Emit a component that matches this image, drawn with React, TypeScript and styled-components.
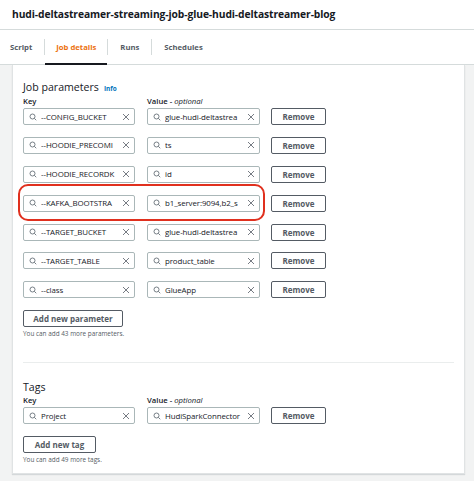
import React from 'react';
import styled, {createGlobalStyle} from 'styled-components';

const GlobalStyle = createGlobalStyle`
	html, body {
		margin: 0;
		padding: 0;
		background: #ffffff;
	}
	body {
		font-family: "Open Sans", "Noto Sans", Arial, sans-serif;
		color: #16191f;
	}
`;

const Page = styled.div`
	width: 474px;
	height: 481px;
	display: flex;
	flex-direction: column;
	overflow: hidden;
	background: #ffffff;
`;

const Header = styled.div`
	height: 30px;
	box-sizing: border-box;
	padding: 0 12px 2px 12px;
	display: flex;
	align-items: center;
	border-bottom: 1px solid #d5dbdb;
	font-weight: 700;
	font-size: 10.3px;
	letter-spacing: -0.1px;
	white-space: nowrap;
`;

const Tabs = styled.div`
	height: 35px;
	box-sizing: border-box;
	display: flex;
	align-items: stretch;
	border-bottom: 1px solid #d5dbdb;
`;

const Tab = styled.div<{$active?: boolean}>`
	display: flex;
	align-items: center;
	padding: 0 ${p => p.$active ? '11px' : '12px'};
	font-size: 7.7px;
	font-weight: 700;
	color: ${p => p.$active ? '#ec7211' : '#545b64'};
	border-bottom: 2px solid ${p => p.$active ? '#16191f' : 'transparent'};
	margin-bottom: -1px;
	&:first-child {
		padding-left: 10px;
	}
`;

const TabSep = styled.div`
	width: 1px;
	height: 16px;
	align-self: center;
	background: #d5dbdb;
`;

const Body = styled.div`
	flex: 1;
	background: #f2f3f3;
	padding: 0 10px 7px 12px;
	display: flex;
`;

const Panel = styled.div`
	flex: 1;
	background: #ffffff;
	border: 1px solid #e0e3e4;
	border-top: none;
	box-shadow: 0 1px 1px rgba(0, 27, 43, 0.12);
	padding: 15px 10px 0 10px;
	display: flex;
	flex-direction: column;
`;

const Section = styled.div`
	display: flex;
	flex-direction: column;
`;

const Heading = styled.div`
	display: flex;
	align-items: baseline;
	gap: 5px;
	font-size: 10.6px;
	line-height: 15px;
	color: #16191f;
`;

const InfoLink = styled.span`
	font-size: 6.4px;
	font-weight: 700;
	color: #0073bb;
`;

const Labels = styled.div`
	display: grid;
	grid-template-columns: 112px 113px;
	column-gap: 12px;
	font-size: 7.7px;
	font-weight: 600;
	line-height: 10px;
	margin-bottom: 2px;
	color: #16191f;
	i {
		font-weight: 400;
	}
`;

const Rows = styled.div`
	display: flex;
	flex-direction: column;
	gap: 11.9px;
`;

const Row = styled.div`
	position: relative;
	display: grid;
	grid-template-columns: 112px 113px 54px;
	column-gap: 12px;
	height: 17px;
	& > :nth-child(3) {
		margin-left: -1px;
	}
`;

const Input = styled.div`
	box-sizing: border-box;
	height: 17px;
	border: 1px solid #aab7b8;
	border-radius: 2px;
	display: flex;
	align-items: center;
	padding: 0 4px 0 5px;
	gap: 4px;
	font-size: 7.9px;
	color: #16191f;
	overflow: hidden;
`;

const InputText = styled.span`
	flex: 1;
	white-space: nowrap;
	overflow: hidden;
	letter-spacing: -0.1px;
`;

const Button = styled.div<{$width?: number}>`
	box-sizing: border-box;
	height: 17px;
	width: ${p => p.$width ? `${p.$width}px` : 'auto'};
	border: 1px solid #545b64;
	border-radius: 2px;
	display: flex;
	align-items: center;
	justify-content: center;
	font-size: 8px;
	font-weight: 700;
	color: #545b64;
	white-space: nowrap;
`;

const AddArea = styled.div<{$top: number}>`
	margin-top: ${p => p.$top}px;
	display: flex;
	flex-direction: column;
	align-items: flex-start;
	gap: 2px;
`;

const Hint = styled.div`
	font-size: 6.4px;
	line-height: 9px;
	color: #545b64;
`;

const Divider = styled.div`
	height: 1px;
	background: #eaeded;
	margin: 24px 0 17px 0;
	width: 431px;
`;

const Highlight = styled.div`
	position: absolute;
	left: -5px;
	top: -11px;
	width: 247px;
	height: 37px;
	box-sizing: border-box;
	border: 2.5px solid #e0301e;
	border-radius: 10px;
	pointer-events: none;
`;

const SearchIcon = () => (
	<svg width="8" height="8" viewBox="0 0 16 16" fill="none" stroke="#687078" strokeWidth="1.8">
		<circle cx="7" cy="7" r="5" />
		<line x1="10.6" y1="10.6" x2="14.5" y2="14.5" />
	</svg>
);

const ClearIcon = () => (
	<svg width="8" height="8" viewBox="0 0 16 16" fill="none" stroke="#545b64" strokeWidth="1.6">
		<line x1="2" y1="2" x2="14" y2="14" />
		<line x1="14" y1="2" x2="2" y2="14" />
	</svg>
);

function Field({text}: {text: string}) {
	return (
		<Input>
			<SearchIcon />
			<InputText>{text}</InputText>
			<ClearIcon />
		</Input>
	);
}

const params = [
	{key: '--CONFIG_BUCKET', value: 'glue-hudi-deltastrea'},
	{key: '--HOODIE_PRECOMI', value: 'ts'},
	{key: '--HOODIE_RECORDK', value: 'id'},
	{key: '--KAFKA_BOOTSTRA', value: 'b1_server:9094,b2_s', mark: true},
	{key: '--TARGET_BUCKET', value: 'glue-hudi-deltastrea'},
	{key: '--TARGET_TABLE', value: 'product_table'},
	{key: '--class', value: 'GlueApp'},
];

export default function App() {
	return (
		<Page>
			<GlobalStyle />
			<Header>hudi-deltastreamer-streaming-job-glue-hudi-deltastreamer-blog</Header>
			<Tabs>
				<Tab>Script</Tab>
				<TabSep />
				<Tab $active>Job details</Tab>
				<TabSep />
				<Tab>Runs</Tab>
				<TabSep />
				<Tab>Schedules</Tab>
			</Tabs>
			<Body>
				<Panel>
					<Section>
						<Heading>Job parameters <InfoLink>Info</InfoLink></Heading>
						<Labels>
							<span>Key</span>
							<span>Value - <i>optional</i></span>
						</Labels>
						<Rows>
							{params.map(p => (
								<Row key={p.key}>
									<Field text={p.key} />
									<Field text={p.value} />
									<Button>Remove</Button>
									{p.mark && <Highlight />}
								</Row>
							))}
						</Rows>
						<AddArea $top={12}>
							<Button $width={100}>Add new parameter</Button>
							<Hint>You can add 43 more parameters.</Hint>
						</AddArea>
					</Section>
					<Divider />
					<Section>
						<Heading>Tags</Heading>
						<Labels>
							<span>Key</span>
							<span>Value - <i>optional</i></span>
						</Labels>
						<Rows>
							<Row>
								<Field text="Project" />
								<Field text="HudiSparkConnector" />
								<Button>Remove</Button>
							</Row>
						</Rows>
						<AddArea $top={12}>
							<Button $width={73}>Add new tag</Button>
							<Hint>You can add 49 more tags.</Hint>
						</AddArea>
					</Section>
				</Panel>
			</Body>
		</Page>
	);
}
